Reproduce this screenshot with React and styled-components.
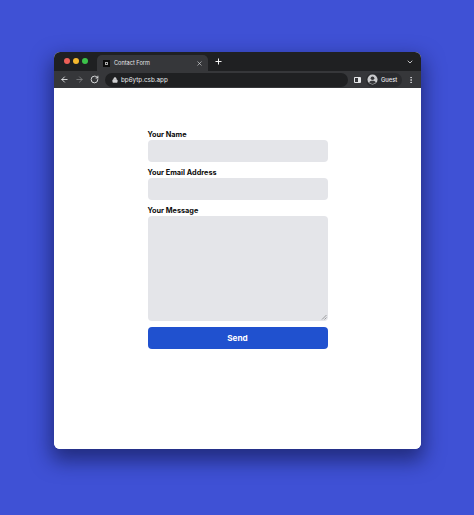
import React from 'react';
import styled, { createGlobalStyle } from 'styled-components';
import { ArrowLeft, ArrowRight, RotateCw, Lock, X, Plus, ChevronDown, EllipsisVertical } from 'lucide-react';

const Global = createGlobalStyle`
  html, body {
    margin: 0;
    padding: 0;
    height: 515px;
    overflow: hidden;
    background: #3f51d5;
    font-family: Inter, "Liberation Sans", sans-serif;
  }
`;

const Page = styled.div`
  width: 474px;
  height: 515px;
  padding: 52px 53px 0 54px;
  box-sizing: border-box;
  background: #3f51d5;
`;

const Window = styled.div`
  height: 397px;
  display: flex;
  flex-direction: column;
  border-radius: 6px;
  overflow: hidden;
  background: #fff;
  box-shadow: 0 9px 20px 3px rgba(15, 20, 70, 0.6);
`;

const TabStrip = styled.div`
  height: 19px;
  flex: none;
  display: flex;
  align-items: flex-end;
  padding: 0 7px;
  background: #1f2022;
  box-sizing: border-box;
`;

const Lights = styled.div`
  display: flex;
  gap: 3px;
  align-self: center;
  padding: 0 0 1px 3px;
  width: 36px;
  box-sizing: border-box;
`;

const Light = styled.span`
  width: 6px;
  height: 6px;
  border-radius: 50%;
  background: ${p => p.$color};
`;

const Tab = styled.div`
  width: 111px;
  height: 16px;
  display: flex;
  align-items: center;
  padding: 0 5px 0 6px;
  box-sizing: border-box;
  border-radius: 5px 5px 0 0;
  background: #36373a;
  color: #e4e5e7;
  font-size: 5.6px;
`;

const Favicon = styled.span`
  width: 7px;
  height: 7px;
  margin-right: 4px;
  flex: none;
  background: #0c0c0c;
  display: flex;
  align-items: center;
  justify-content: center;
  &::after {
    content: '';
    width: 3px;
    height: 3px;
    border: 0.7px solid #aaa;
    box-sizing: border-box;
  }
`;

const TabTitle = styled.span`
  flex: 1;
`;

const NewTab = styled.span`
  display: flex;
  align-self: center;
  margin-left: 6px;
  flex: 1;
  color: #fff;
`;

const Toolbar = styled.div`
  height: 17px;
  flex: none;
  display: flex;
  align-items: center;
  padding: 0 6px;
  box-sizing: border-box;
  background: #36373a;
`;

const NavButtons = styled.div`
  display: flex;
  gap: 6px;
  margin-right: 6px;
`;

const Address = styled.div`
  flex: none;
  width: 243px;
  height: 14px;
  display: flex;
  align-items: center;
  gap: 3px;
  padding-left: 7px;
  box-sizing: border-box;
  border-radius: 7px;
  background: #1f2022;
  color: #e8e9eb;
  font-size: 6.3px;
`;

const SidePanelIcon = styled.span`
  flex: none;
  width: 7px;
  height: 6px;
  margin: 0 5px 0 6px;
  box-sizing: border-box;
  border: 1px solid #e4e5e7;
  border-right-width: 3px;
  border-radius: 1px;
`;

const Profile = styled.div`
  flex: none;
  display: flex;
  align-items: center;
  gap: 3px;
  width: 36px;
  height: 14px;
  padding-left: 1px;
  box-sizing: border-box;
  border-radius: 7px;
  background: #2a2b2e;
  color: #e8e9eb;
  font-size: 5.8px;
  font-weight: 500;
`;

const Content = styled.main`
  flex: 1;
  display: flex;
  justify-content: center;
  padding-top: 41px;
  background: #fff;
`;

const Form = styled.form`
  width: 180px;
  display: flex;
  flex-direction: column;
`;

const Label = styled.label`
  display: block;
  height: 11px;
  line-height: 12px;
  font-size: 7.3px;
  font-weight: 700;
  color: #0a0a0a;
`;

const Field = styled.div`
  margin-bottom: 5px;
`;

const Input = styled.input`
  display: block;
  width: 100%;
  height: 22px;
  padding: 0;
  border: 0;
  border-radius: 4px;
  background: #e4e5e9;
`;

const MessageBox = styled.div`
  position: relative;
  height: 105px;
  border-radius: 4px;
  background: #e4e5e9;
`;

const Grip = styled.svg`
  position: absolute;
  right: 1px;
  bottom: 1px;
`;

const SendButton = styled.button`
  height: 22px;
  margin-top: 1px;
  border: 0;
  border-radius: 4px;
  background: #2051cf;
  color: #fff;
  font-family: inherit;
  font-size: 8.2px;
  font-weight: 700;
`;

export default function App() {
  return (
    <Page>
      <Global />
      <Window>
        <TabStrip>
          <Lights>
            <Light $color="#ed5f57" />
            <Light $color="#f5b82e" />
            <Light $color="#3cc24a" />
          </Lights>
          <Tab>
            <Favicon />
            <TabTitle>Contact Form</TabTitle>
            <X size={7} color="#e4e5e7" strokeWidth={2} />
          </Tab>
          <NewTab><Plus size={9} strokeWidth={2.5} /></NewTab>
          <ChevronDown size={8} color="#e4e5e7" strokeWidth={2.5} style={{ alignSelf: 'center' }} />
        </TabStrip>
        <Toolbar>
          <NavButtons>
            <ArrowLeft size={9} color="#e4e5e7" strokeWidth={2.4} />
            <ArrowRight size={9} color="#7d7e80" strokeWidth={2.4} />
            <RotateCw size={9} color="#e4e5e7" strokeWidth={2.4} />
          </NavButtons>
          <Address>
            <Lock size={6} color="#d0d1d3" fill="#d0d1d3" strokeWidth={2} />
            bp6ytp.csb.app
          </Address>
          <SidePanelIcon />
          <Profile>
            <svg width="11" height="11" viewBox="0 0 12 12">
              <circle cx="6" cy="6" r="5.5" fill="#c9cacc" />
              <circle cx="6" cy="4.6" r="2" fill="#36373a" />
              <path d="M2.4 9.2C3.2 7.8 4.6 7.4 6 7.4s2.8.4 3.6 1.8A4.6 4.6 0 0 1 6 10.8a4.6 4.6 0 0 1-3.6-1.6z" fill="#36373a" />
            </svg>
            Guest
          </Profile>
          <EllipsisVertical size={8} color="#e4e5e7" strokeWidth={2.5} style={{ marginLeft: 5, flex: 'none' }} />
        </Toolbar>
        <Content>
          <Form onSubmit={e => e.preventDefault()}>
            <Field>
              <Label>Your Name</Label>
              <Input type="text" />
            </Field>
            <Field>
              <Label>Your Email Address</Label>
              <Input type="email" />
            </Field>
            <Field>
              <Label>Your Message</Label>
              <MessageBox>
                <Grip width="6" height="6" viewBox="0 0 6 6">
                  <path d="M5.5 1 1 5.5M5.5 3.5 3.5 5.5" stroke="#7c7d80" strokeWidth="0.7" fill="none" />
                </Grip>
              </MessageBox>
            </Field>
            <SendButton type="submit">Send</SendButton>
          </Form>
        </Content>
      </Window>
    </Page>
  );
}
